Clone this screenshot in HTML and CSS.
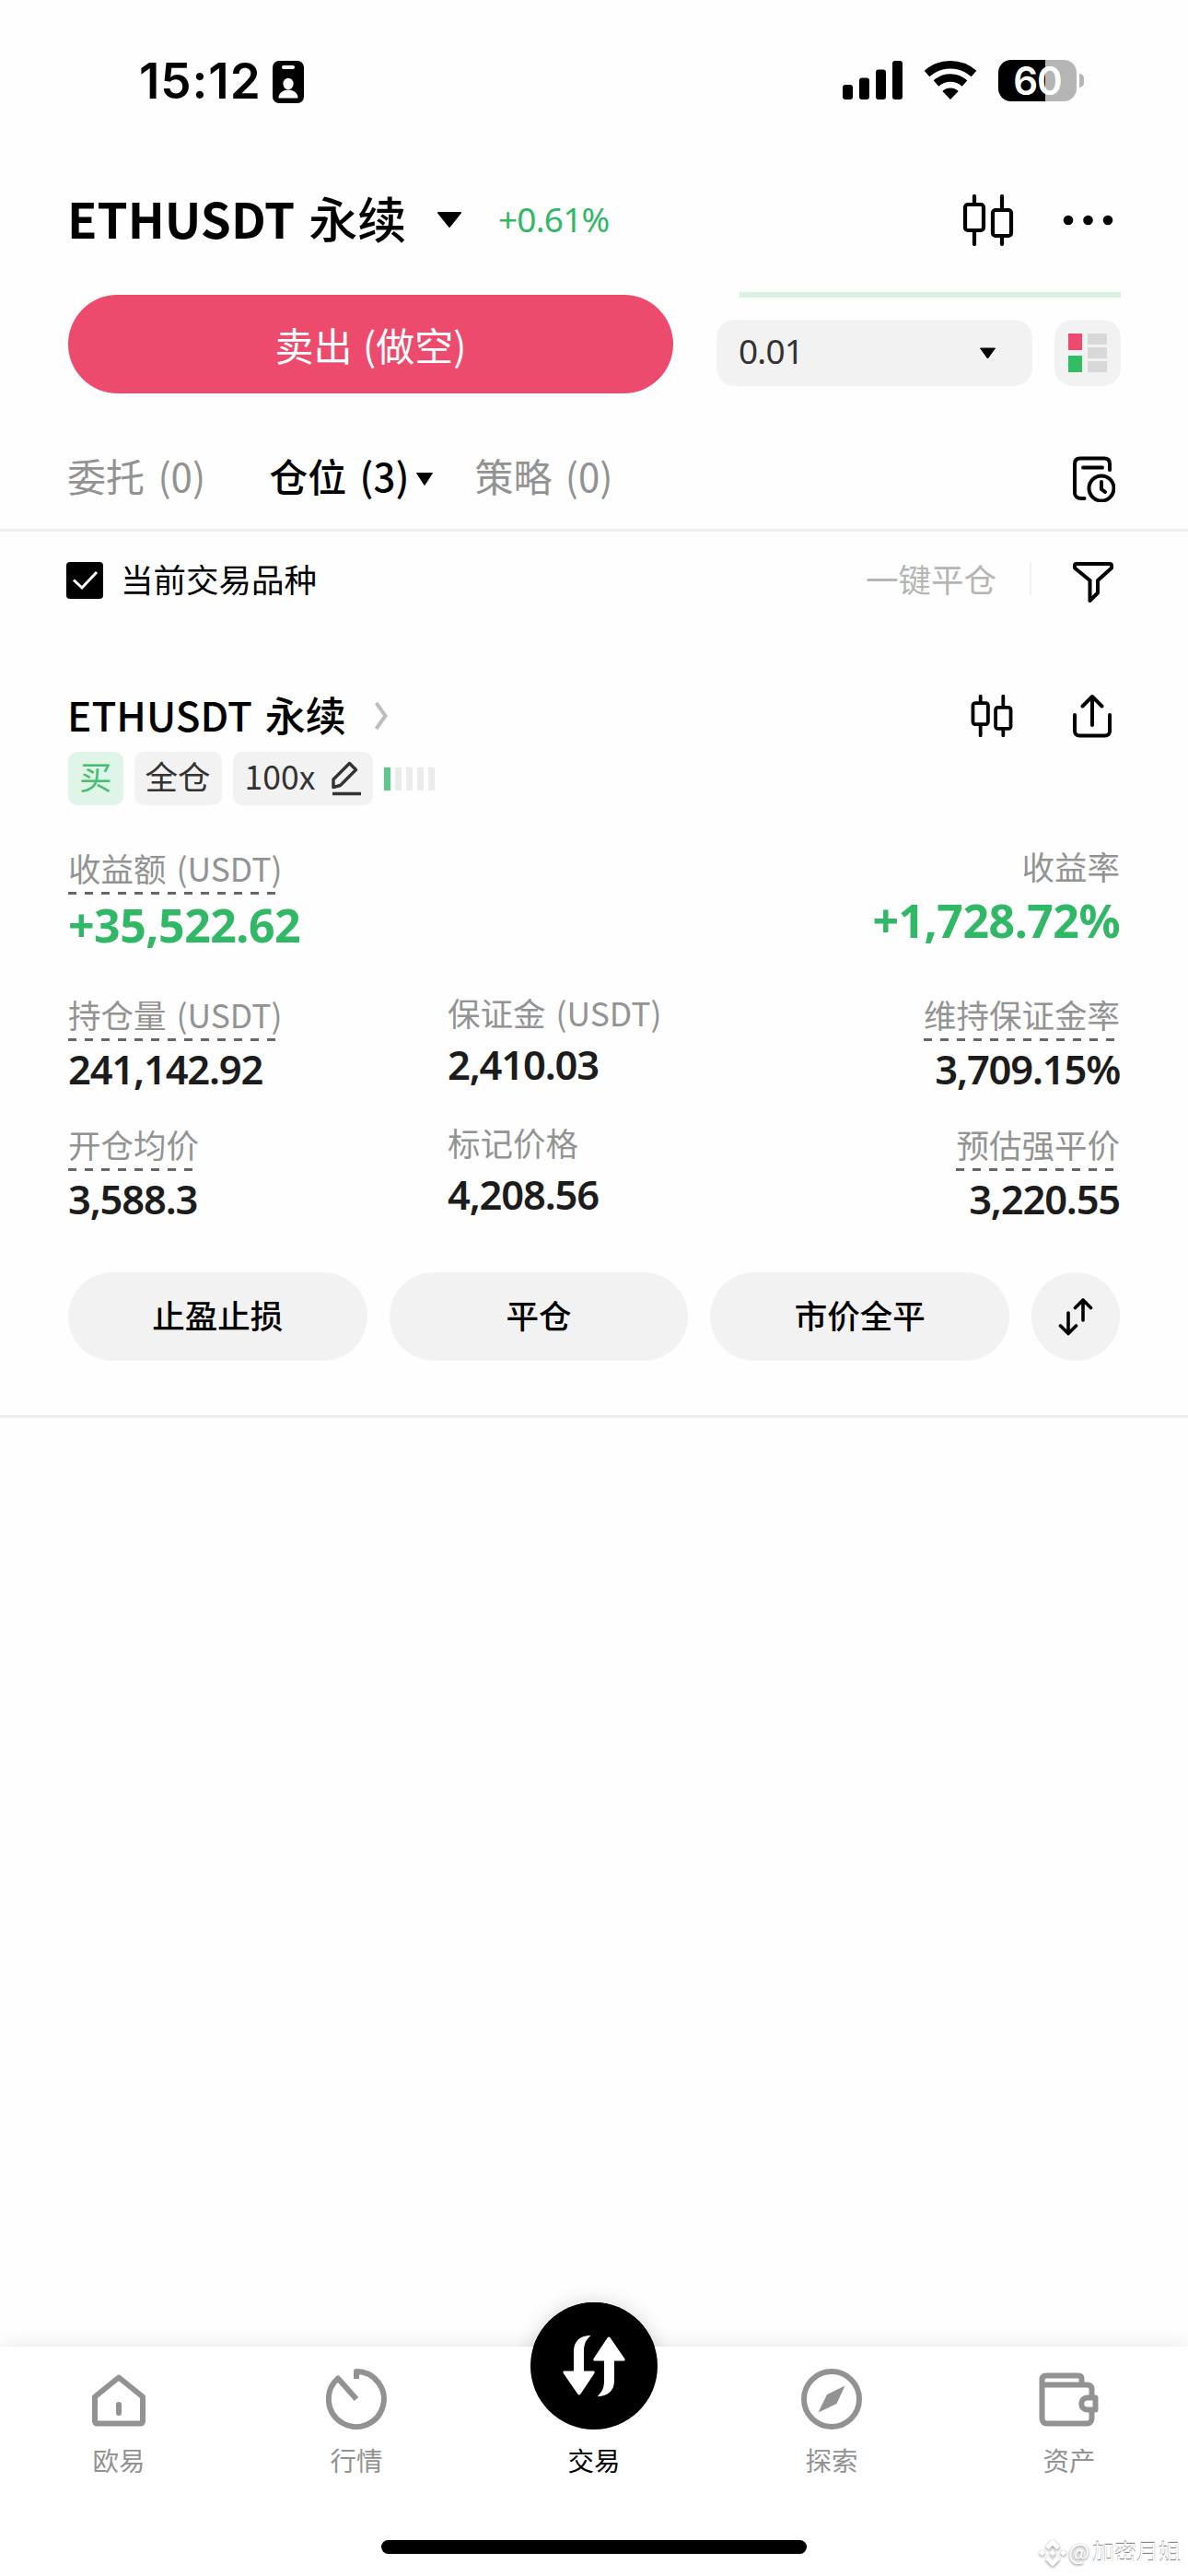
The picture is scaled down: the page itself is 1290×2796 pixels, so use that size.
FILE: index.html
```
<!DOCTYPE html>
<html lang="zh-CN">
<head>
    <meta charset="UTF-8">
    <meta name="viewport" content="width=device-width, initial-scale=1.0">
    <title>ETHUSDT 永续</title>
    <link rel="stylesheet" href="styles.css">
</head>
<body>
    <div class="phone">
        <div class="status">
            <span class="clock">15:12</span>
            <svg class="id-badge" width="34" height="46" viewBox="0 0 34 46">
                <rect width="34" height="46" rx="7"/>
                <rect x="10" y="5" width="14" height="4" rx="2" fill="#fff"/>
                <ellipse cx="17" cy="25" rx="5.6" ry="6.2" fill="#fff"/>
                <path d="M6.500 40.500c0-5.500 4.500-9 10.500-9s10.500 3.500 10.500 9z" fill="#fff"/>
            </svg>
            <svg class="signal" width="66" height="42" viewBox="0 0 66 42">
                <rect y="26" width="11" height="16" rx="3"/>
                <rect x="18" y="18.500" width="11" height="23.500" rx="3"/>
                <rect x="36" y="9.500" width="11" height="32.500" rx="3"/>
                <rect x="54" width="11" height="42" rx="3"/>
            </svg>
            <svg class="wifi" width="58" height="42" viewBox="0 0 58 42">
                <path d="M3.500 14C18 1 40 1 54.500 14" fill="none" stroke="#000" stroke-width="8.500"/>
                <path d="M13.500 24.500C22.500 16.500 35.500 16.500 44.500 24.500" fill="none" stroke="#000" stroke-width="8.500"/>
                <path d="M29 42 20.300 33c4.800-4.600 12.600-4.600 17.400 0z"/>
            </svg>
            <div class="battery">60</div>
            <div class="battery-tip"></div>
        </div>

        <div class="header">
            <h1>ETHUSDT <span>永续</span></h1>
            <svg class="caret-big" width="28" height="18" viewBox="0 0 28 18"><path d="M2 1h24L14 16z" stroke="#000" stroke-width="2" stroke-linejoin="round"/></svg>
            <span class="change">+0.61%</span>
            <svg class="candles" width="56" height="56" viewBox="0 0 56 56">
                <path d="M13 2v8M13 40v14M43 2v14M43 46v8"/>
                <rect x="3" y="11" width="20" height="28" rx="3"/>
                <rect x="33" y="17" width="20" height="28" rx="3"/>
            </svg>
            <svg width="56" height="12" viewBox="0 0 56 12"><circle cx="6" cy="6" r="5.300"/><circle cx="27.500" cy="6" r="5.300"/><circle cx="49" cy="6" r="5.300"/></svg>
        </div>

        <div class="trade">
            <button class="sell">卖出 (做空)</button>
            <div class="book">
                <div class="depth"></div>
                <div class="book-tools">
                    <div class="precision">
                        <span>0.01</span>
                        <svg width="19" height="13" viewBox="0 0 19 13"><path d="M1.500 1h16l-8 11z" stroke="#000" stroke-linejoin="round"/></svg>
                    </div>
                    <div class="layout">
                        <svg width="44" height="44" viewBox="0 0 44 44">
                            <path d="M1 1h15v18H1z" fill="#ec4b6d"/>
                            <path d="M1 25h15v18H1z" fill="#31bd65"/>
                            <path d="M22 1h21v12H22zM22 16h21v12H22zM22 31h21v12H22z" fill="#d8d8d8"/>
                        </svg>
                    </div>
                </div>
            </div>
        </div>

        <div class="tabs">
            <span class="tab">委托 (0)</span>
            <span class="tab active">仓位 (3)<svg width="20" height="16" viewBox="0 0 20 16"><path d="M1.500 1.500h17L10 14.500z" stroke="#000" stroke-linejoin="round"/></svg></span>
            <span class="tab">策略 (0)</span>
            <svg class="history line-icon" width="46" height="50" viewBox="0 0 46 50">
                <path d="M12.500 46H9c-4 0-7-2-7-6V8.500c0-4 2-6 6-6h26c4 0 6 2 6 6V15"/>
                <path d="M11 12.500h21"/>
                <circle cx="31" cy="35" r="13.500"/>
                <path d="M31 28v8l4 3"/>
            </svg>
        </div>

        <div class="filter">
            <svg class="check" width="40" height="40" viewBox="0 0 40 40"><rect width="40" height="40" rx="4"/><path d="M8 19.500l9 8.500L33 11" fill="none" stroke="#fff" stroke-width="3"/></svg>
            <span>当前交易品种</span>
            <span class="close-all">一键平仓</span>
            <svg class="funnel line-icon" width="44" height="44" viewBox="0 0 44 44"><path d="M3.500 2h36.500c1.500 0 2 1 2 2v2.500L27 20v13.500L18.500 42V20L2 6.500V4c0-1 .5-2 1.500-2z"/></svg>
        </div>

        <div class="position">
            <div class="pos-head">
                <h2>ETHUSDT 永续</h2>
                <svg class="chevron" width="16" height="34" viewBox="0 0 16 34"><path d="M2.500 3l10 14-10 14"/></svg>
                <svg class="candles small" width="46" height="46" viewBox="0 0 56 56">
                    <path d="M13 2v8M13 40v14M43 2v14M43 46v8"/>
                    <rect x="3" y="11" width="20" height="28" rx="3"/>
                    <rect x="33" y="17" width="20" height="28" rx="3"/>
                </svg>
                <svg class="line-icon" width="42" height="48" viewBox="0 0 42 48"><path d="M2 23v17.500c0 3 2 5 5 5h28c3 0 5-2 5-5V23M21 34V3M10.500 13.500L21 3l10.500 10.500"/></svg>
            </div>

            <div class="tags">
                <span class="tag buy">买</span>
                <span class="tag">全仓</span>
                <span class="tag lever">100x
                    <svg width="34" height="38" viewBox="0 0 34 38"><path d="M2 35.500h31M3 28.500V20L20.500 2.500l7 7-17 17z"/></svg>
                </span>
                <div class="risk"><i class="on"></i><i></i><i></i><i></i><i></i></div>
            </div>

            <div class="stats">
                <div class="stat dashed">
                    <label>收益额 (USDT)</label>
                    <p class="profit">+35,522.62</p>
                </div>
                <div class="stat"></div>
                <div class="stat right">
                    <label>收益率</label>
                    <p class="profit">+1,728.72%</p>
                </div>

                <div class="stat dashed">
                    <label>持仓量 (USDT)</label>
                    <p>241,142.92</p>
                </div>
                <div class="stat">
                    <label>保证金 (USDT)</label>
                    <p>2,410.03</p>
                </div>
                <div class="stat right dashed">
                    <label>维持保证金率</label>
                    <p>3,709.15%</p>
                </div>

                <div class="stat dashed">
                    <label>开仓均价</label>
                    <p>3,588.3</p>
                </div>
                <div class="stat">
                    <label>标记价格</label>
                    <p>4,208.56</p>
                </div>
                <div class="stat right dashed">
                    <label>预估强平价</label>
                    <p>3,220.55</p>
                </div>
            </div>

            <div class="actions">
                <button>止盈止损</button>
                <button>平仓</button>
                <button>市价全平</button>
                <button class="swap">
                    <svg width="38" height="42" viewBox="0 0 38 42"><path d="M11 17v22M2.500 31l8.500 8.500 8.500-8.500M27 25V3M18.500 11.500L27 3l8.500 8.500"/></svg>
                </button>
            </div>
        </div>

        <div class="nav">
            <div class="nav-item">
                <svg width="66" height="66" viewBox="0 0 66 66"><path d="M33 9.500L7 30.500V57c0 1.500 1 2.500 2.500 2.500h47c1.500 0 2.500-1 2.500-2.500V30.500z"/><path d="M33 39v9" stroke-linecap="round"/></svg>
                <span>欧易</span>
            </div>
            <div class="nav-item">
                <svg width="66" height="66" viewBox="0 0 66 66"><path d="M33 11V3a30 30 0 1 1-20 7.500L33 33"/></svg>
                <span>行情</span>
            </div>
            <div class="nav-item active">
                <div class="fab-shadow"></div>
                <div class="fab">
                    <svg width="68" height="68" viewBox="0 0 68 68">
                        <path d="M30.500 1C18 1 12 8 12 18v21.500H2c-1.500 0-2 1.200-1.200 2.400l15.500 22.700c1 1.300 2.200 1.300 3.100 0l15-22.700c.8-1.200.2-2.400-1.200-2.400H23V18c0-8 2-12 7.500-17z"/>
                        <path d="M37.500 67C50 67 56 60 56 50V28.500h10c1.500 0 2-1.200 1.200-2.400L51.700 3.400c-1-1.300-2.200-1.300-3.100 0l-15 22.700c-.8 1.200-.2 2.400 1.200 2.400H45V50c0 8-2 12-7.500 17z"/>
                    </svg>
                </div>
                <span>交易</span>
            </div>
            <div class="nav-item">
                <svg width="66" height="66" viewBox="0 0 66 66"><circle cx="33" cy="33" r="30"/><path class="solid" d="M47.500 18.500L38.500 38 18.500 47.500 28 28z"/></svg>
                <span>探索</span>
            </div>
            <div class="nav-item">
                <svg width="66" height="66" viewBox="0 0 66 66"><path d="M3.500 17V12c0-3 1.500-4.500 4.500-4.500h35c2.500 0 3.500 1.500 3.500 3.500v6.500M3.500 17.500h49c3 0 5 1.500 5 4.500v7M57.500 46v8c0 3.500-2 5.500-5.500 5.500H9c-3.500 0-5.500-2-5.500-5.500V12"/><path d="M61.500 31.500h-8.500c-9 0-9 13 0 13h8.500z"/></svg>
                <span>资产</span>
            </div>
        </div>
        <div class="home-bar"></div>

        <div class="watermark">
            <svg width="30" height="30" viewBox="0 0 30 30"><path d="M15 0l8 8-3.500 3.500L15 7l-4.500 4.500L7 8zM15 30l8-8-3.500-3.500L15 23l-4.500-4.500L7 22zM15 11.500l3.500 3.500-3.500 3.500-3.500-3.500zM3.500 11.500L7 15l-3.500 3.500L0 15zM26.500 11.500L30 15l-3.500 3.500L23 15z"/></svg>
            <span class="at">@</span><span>加密月姐</span>
        </div>
    </div>
</body>
</html>
```
FILE: styles.css
```
* {
    margin: 0;
    padding: 0;
    box-sizing: border-box;
}
body {
    background: #fefefe;
    font-family: 'Noto Sans CJK SC', sans-serif;
    color: #000;
}
.phone {
    position: relative;
    width: 1290px;
    height: 2796px;
    display: flex;
    flex-direction: column;
    overflow: hidden;
}
svg {
    display: block;
    flex-shrink: 0;
}
button {
    border: none;
    font-family: inherit;
}

/* status bar */
.status {
    height: 174px;
    padding: 0 113px 0 151px;
    display: flex;
    align-items: center;
}
.clock {
    font: 600 53px/60px Inter, sans-serif;
    letter-spacing: 0.9px;
    width: 145px;
    margin-top: 2px;
}
.id-badge {
    margin-top: 3px;
}
.signal {
    margin-left: auto;
}
.wifi {
    margin: 0 23px 0 22px;
}
.battery {
    width: 85px;
    height: 45px;
    border-radius: 14px;
    background: linear-gradient(to right, #000 60%, #b5b5b5 60%);
    color: #fff;
    font: 600 42px/45px Inter, sans-serif;
    text-align: center;
    letter-spacing: -1px;
}
.battery-tip {
    width: 5px;
    height: 15px;
    margin-left: 3px;
    border-radius: 0 6px 6px 0;
    background: #b5b5b5;
}

/* title */
.header {
    height: 130px;
    padding: 0 80px 0 73px;
    display: flex;
    align-items: center;
}
h1 {
    font-size: 53px;
    font-weight: 700;
    line-height: 80px;
    width: 401px;
    white-space: nowrap;
    margin-top: -7px;
}
h1 span {
    font-weight: 500;
    margin-left: 3px;
}
.change {
    font: 400 37px/50px 'Noto Sans', sans-serif;
    color: #31b866;
    letter-spacing: -0.8px;
    margin-left: 39px;
    margin-top: -3px;
}
.candles {
    margin-left: auto;
    margin-right: 53px;
    fill: none;
    stroke: #000;
    stroke-width: 4.2;
    stroke-linecap: round;
}
.candles.small {
    margin-right: 65px;
    stroke-width: 4.6;
}

/* sell button and order book tools */
.trade {
    padding: 13px 73px 0 74px;
    display: flex;
    justify-content: space-between;
}
.sell {
    width: 657px;
    height: 107px;
    margin-top: 3px;
    border-radius: 54px;
    background: #ec4b6d;
    color: #fff;
    font-size: 42px;
    line-height: 101px;
    word-spacing: 2px;
}
.book {
    width: 439px;
}
.depth {
    height: 6px;
    margin-left: 25px;
    background: #d6f3e1;
}
.book-tools {
    margin-top: 24px;
    display: flex;
    justify-content: space-between;
}
.precision {
    width: 343px;
    height: 72px;
    padding: 0 39px 0 24px;
    border-radius: 20px;
    background: #f2f2f2;
    display: flex;
    align-items: center;
    justify-content: space-between;
}
.precision span {
    font: 400 37px/68px 'Noto Sans', sans-serif;
    margin-top: -4px;
    color: #333;
    letter-spacing: -0.8px;
}
.layout {
    width: 72px;
    height: 72px;
    border-radius: 20px;
    background: #f2f2f2;
    display: grid;
    place-items: center;
}

/* tabs */
.tabs {
    height: 150px;
    padding: 36px 79px 0 73px;
    border-bottom: 3px solid #eee;
    display: flex;
    align-items: center;
}
.tab {
    font-size: 42px;
    line-height: 60px;
    color: #929292;
    margin-right: 69px;
    margin-top: -5px;
    white-space: nowrap;
    word-spacing: 5px;
}
.tab.active {
    display: flex;
    align-items: center;
    color: #000;
    font-weight: 500;
    margin-right: 44px;
}
.tab svg {
    margin: 8px 0 0 7px;
}
.history {
    margin-left: auto;
    margin-top: 2px;
}
.line-icon {
    fill: none;
    stroke: #000;
    stroke-width: 4;
    stroke-linecap: round;
    stroke-linejoin: round;
}

/* filter row */
.filter {
    height: 106px;
    padding: 0 81px 0 72px;
    display: flex;
    align-items: center;
    font-size: 35.5px;
    line-height: 50px;
}
.filter span {
    margin-top: -5px;
}
.check {
    margin-right: 19px;
}
.filter .close-all {
    margin-left: auto;
    margin-right: 45px;
    padding-right: 36px;
    color: #b5b5b5;
    border-right: 2px solid #f0f0f0;
    line-height: 36px;
}
.funnel {
    margin-top: 4px;
}

/* position card */
.position {
    padding: 64px 74px 59px;
    border-bottom: 3px solid #eee;
}
.pos-head {
    height: 60px;
    padding-right: 9px;
    display: flex;
    align-items: center;
}
h2 {
    font-size: 44px;
    font-weight: 500;
    line-height: 60px;
    margin-top: -4px;
    margin-left: -1px;
    word-spacing: 4px;
}
.chevron {
    margin-left: 30px;
    fill: none;
    stroke: #bdbdbd;
    stroke-width: 4;
}
.tags {
    margin-top: 9px;
    display: flex;
    align-items: center;
    gap: 12px;
}
.tag {
    height: 58px;
    padding: 0 12px;
    border-radius: 10px;
    background: #f2f2f2;
    color: #333;
    font-size: 35.5px;
    line-height: 52px;
    display: flex;
}
.tag.buy {
    background: #dff5e7;
    color: #45bd75;
}
.lever {
    padding-left: 13px;
    gap: 17px;
}
.lever svg {
    margin-top: 10px;
    fill: none;
    stroke: #333;
    stroke-width: 3.4;
    stroke-linejoin: round;
}
.risk {
    display: flex;
    gap: 5px;
}
.risk i {
    width: 7px;
    height: 25px;
    background: #ebebeb;
}
.risk .on {
    background: #5cc98a;
}

/* numbers */
.stats {
    margin-top: 44px;
    display: grid;
    grid-template-columns: 412px 1fr auto;
    grid-template-rows: 159px 141px 163px;
}
.stat label {
    display: block;
    width: fit-content;
    height: 48px;
    font-size: 35.5px;
    line-height: 44px;
    color: #939393;
    white-space: nowrap;
    word-spacing: 3px;
}
.stat p {
    margin-top: 4px;
    font: 600 43.5px/52px 'Noto Sans', sans-serif;
    letter-spacing: -1.2px;
    color: #1c1c1c;
}
.stat .profit {
    margin-top: 4px;
    font-weight: 700;
    font-size: 50px;
    line-height: 58px;
    letter-spacing: -0.5px;
    color: #31b866;
}
.dashed label {
    height: 53px;
    padding-top: 2px;
    background: repeating-linear-gradient(to right, #666 0 9px, transparent 9px 18px) left bottom / 100% 3px no-repeat;
}
.right {
    text-align: right;
}
.right label {
    margin-left: auto;
}
.actions {
    display: flex;
    gap: 24px;
}
.actions button {
    flex: 1;
    height: 96px;
    border-radius: 48px;
    background: #f2f2f2;
    font-size: 35.5px;
    font-weight: 500;
    line-height: 88px;
    padding-bottom: 4px;
    color: #000;
}
.actions .swap {
    flex: 0 0 96px;
    padding-bottom: 0;
    display: grid;
    place-items: center;
}
.swap svg {
    fill: none;
    stroke: #000;
    stroke-width: 3.6;
    stroke-linecap: round;
    stroke-linejoin: round;
}

/* bottom navigation */
.nav {
    position: relative;
    height: 249px;
    flex-shrink: 0;
    margin-top: auto;
    background: #fff;
    box-shadow: 0 -1px 20px rgba(0, 0, 0, 0.09);
    display: flex;
}
.nav-item {
    position: relative;
    flex: 1;
    padding-top: 24px;
    display: flex;
    flex-direction: column;
    align-items: center;
    color: #929292;
}
.nav-item span {
    margin-top: 13px;
    font-size: 28.5px;
    line-height: 40px;
}
.nav-item > svg {
    fill: none;
    stroke: #929292;
    stroke-width: 6;
    stroke-linejoin: round;
}
.nav-item .solid {
    fill: #929292;
    stroke: none;
}
.nav-item.active {
    padding-top: 90px;
    color: #000;
}
.fab, .fab-shadow {
    position: absolute;
    top: -48px;
    left: 60px;
    width: 138px;
    height: 138px;
    border-radius: 50%;
    background: #000;
    display: grid;
    place-items: center;
}
.fab-shadow {
    z-index: -1;
    box-shadow: 0 0 22px rgba(0, 0, 0, 0.16);
}
.fab svg {
    fill: #fff;
}
.home-bar {
    position: relative;
    width: 462px;
    height: 15px;
    flex-shrink: 0;
    margin: -39px auto 24px;
    border-radius: 8px;
    background: #000;
}

.watermark {
    position: absolute;
    right: 8px;
    bottom: 9px;
    display: flex;
    align-items: center;
    color: #fff;
    font-size: 24px;
    line-height: 36px;
    text-shadow: 0 -1px 1px rgba(0, 0, 0, 0.55);
}
.watermark svg {
    margin-top: 4px;
    fill: #fff;
    filter: drop-shadow(0 1px 1.5px rgba(0, 0, 0, 0.5));
}
.watermark .at {
    margin: 0 3px 0 2px;
    text-shadow: 0 1px 3px rgba(0, 0, 0, 0.6);
}
```
